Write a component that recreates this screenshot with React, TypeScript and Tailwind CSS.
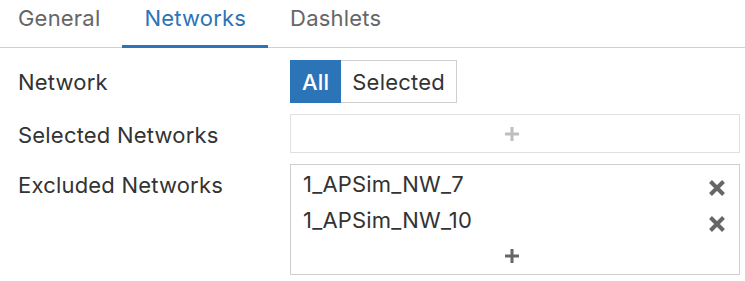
import { useState } from "react"

const TABS = ["General", "Networks", "Dashlets"]
const EXCLUDED = ["1_APSim_NW_7", "1_APSim_NW_10"]

function PlusIcon({ className }: { className?: string }) {
  return (
    <svg className={className} viewBox="0 0 16 16" fill="none" stroke="currentColor" strokeWidth={3}>
      <path d="M8 1v14M1 8h14" />
    </svg>
  )
}

function CloseIcon({ className }: { className?: string }) {
  return (
    <svg className={className} viewBox="0 0 18 18" fill="none" stroke="currentColor" strokeWidth={4}>
      <path d="M2.5 2.5l13 13M15.5 2.5l-13 13" />
    </svg>
  )
}

export default function App() {
  const [tab, setTab] = useState("Networks")
  const [mode, setMode] = useState<"all" | "selected">("all")

  return (
    <div className="h-[281px] w-[745px] overflow-hidden bg-white font-['Inter',sans-serif] text-[22px] leading-[28px] tracking-[0.2px] text-[#333]">
      <div className="flex border-b border-[#d0d0d0]">
        {TABS.map((t) => (
          <button
            key={t}
            onClick={() => setTab(t)}
            className={
              t === tab
                ? "-mb-px border-b-[3px] border-[#2c74b8] px-[22px] pb-[13px] pt-[4px] text-[#2c74b8] first:ml-[-5px]"
                : "-mb-px border-b-[3px] border-transparent px-[22px] pb-[13px] pt-[4px] text-[#666] first:ml-[-4px]"
            }
          >
            {t}
          </button>
        ))}
      </div>

      <div className="flex flex-col gap-[11px] pt-[12px]">
        <div className="flex items-start">
          <div className="w-[290px] pl-[18px] pt-[8px]">Network</div>
          <div className="flex h-[43px] border border-[#cfcfcf]">
            <button
              onClick={() => setMode("all")}
              className={
                mode === "all"
                  ? "-my-px -ml-px bg-[#2c74b8] px-[12px] font-medium text-white"
                  : "-my-px -ml-px px-[12px] text-[#333]"
              }
            >
              All
            </button>
            <button
              onClick={() => setMode("selected")}
              className={
                mode === "selected"
                  ? "-my-px -mr-px bg-[#2c74b8] px-[12px] font-medium text-white"
                  : "px-[11px] text-[#333]"
              }
            >
              Selected
            </button>
          </div>
        </div>

        <div className="flex items-start">
          <div className="w-[290px] pl-[18px] pt-[7px]">Selected Networks</div>
          <div className="flex h-[39px] w-[450px] items-center justify-center border border-[#e0e0e0] pr-[6px]">
            <PlusIcon className="h-4 w-4 text-[#bdbdbd]" />
          </div>
        </div>

        <div className="flex items-start">
          <div className="w-[290px] pl-[18px] pt-[7px]">Excluded Networks</div>
          <div className="w-[450px] border border-[#cfcfcf] pt-px">
            {EXCLUDED.map((n) => (
              <div key={n} className="flex h-[36px] items-center justify-between pl-[12px] pr-[13px]">
                <span>{n}</span>
                <CloseIcon className="mt-[7px] h-[18px] w-[18px] text-[#666]" />
              </div>
            ))}
            <div className="flex h-[36px] items-center justify-center pr-[6px]">
              <PlusIcon className="h-4 w-4 text-[#666]" />
            </div>
          </div>
        </div>
      </div>
    </div>
  )
}
